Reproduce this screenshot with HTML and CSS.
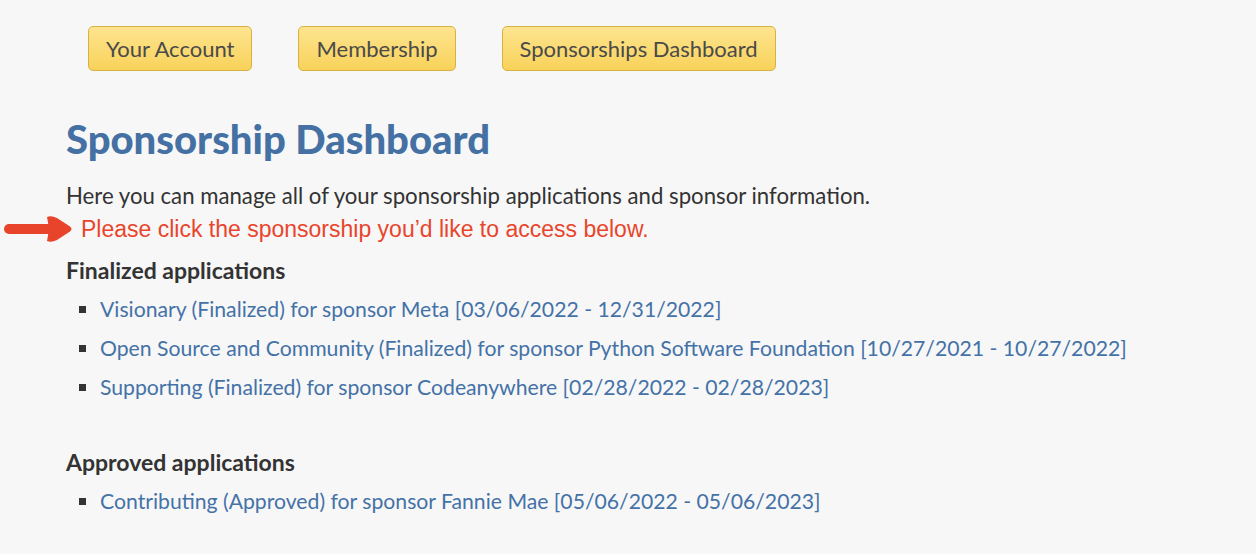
FILE: index.html
```html
<!DOCTYPE html>
<html lang="en">
<head>
<meta charset="utf-8">
<title>Sponsorship Dashboard</title>
<link rel="stylesheet" href="styles.css">
</head>
<body>
<nav class="tabs">
  <a class="tab" href="#">Your Account</a>
  <a class="tab" href="#">Membership</a>
  <a class="tab" href="#">Sponsorships Dashboard</a>
</nav>
<main class="content">
  <h1 class="title">Sponsorship Dashboard</h1>
  <p class="intro">Here you can manage all of your sponsorship applications and sponsor information.</p>
  <div class="note">
    <svg class="arrow" width="70" height="30" viewBox="0 0 70 30" aria-hidden="true">
      <path d="M6 15 H50" stroke="#e8432b" stroke-width="10" stroke-linecap="round" fill="none"/>
      <path d="M44 3 Q48 1 54 4 L67 12.5 Q70 15 67 17.5 L54 26 Q48 29 44 27 Q47 15 44 3 Z" fill="#e8432b"/>
    </svg>
    <span class="note-text">Please click the sponsorship you’d like to access below.</span>
  </div>
  <h2 class="group">Finalized applications</h2>
  <ul class="apps">
    <li><a href="#">Visionary (Finalized) for sponsor Meta [03/06/2022 - 12/31/2022]</a></li>
    <li><a href="#">Open Source and Community (Finalized) for sponsor Python Software Foundation [10/27/2021 - 10/27/2022]</a></li>
    <li><a href="#">Supporting (Finalized) for sponsor Codeanywhere [02/28/2022 - 02/28/2023]</a></li>
  </ul>
  <h2 class="group group-gap">Approved applications</h2>
  <ul class="apps">
    <li><a href="#">Contributing (Approved) for sponsor Fannie Mae [05/06/2022 - 05/06/2023]</a></li>
  </ul>
</main>
</body>
</html>
```
FILE: styles.css
```css
html, body {
  margin: 0;
  padding: 0;
}
body {
  background: #f7f7f7;
  font-family: "Lato", "Noto Sans", sans-serif;
  color: #333;
  width: 1256px;
  height: 554px;
  overflow: hidden;
}
.tabs {
  display: flex;
  gap: 46px;
  padding: 26px 0 0 88px;
}
.tab {
  display: flex;
  align-items: center;
  height: 45px;
  box-sizing: border-box;
  padding: 0 17px;
  border: 1px solid #d8b142;
  border-radius: 5px;
  background: linear-gradient(#fde48f, #f8d25a);
  color: #4a4a4a;
  font-size: 22px;
  text-decoration: none;
}
.content {
  padding-left: 66px;
}
.title {
  margin: 44px 0 0;
  font-size: 40px;
  line-height: 48px;
  font-weight: 900;
  color: #4470a3;
}
.intro {
  margin: 18px 0 0;
  font-size: 22.2px;
  line-height: 30px;
  color: #333;
}
.note {
  display: flex;
  align-items: center;
  margin-left: -63px;
  height: 30px;
  margin-top: 3px;
}
.arrow {
  flex: none;
  margin-right: 8px;
}
.note-text {
  font-family: "Liberation Sans", Arial, sans-serif;
  font-size: 23px;
  color: #e8452c;
}
.group {
  margin: 11px 0 0;
  font-size: 23px;
  line-height: 30px;
  font-weight: 700;
  color: #333;
}
.group-gap {
  margin-top: 40px;
}
.apps {
  list-style: square;
  margin: 5px 0 0;
  padding-left: 34px;
  color: #333;
}
.apps li {
  font-size: 21.2px;
  line-height: 39px;
}
.apps a {
  color: #4472a7;
  text-decoration: none;
}
```
